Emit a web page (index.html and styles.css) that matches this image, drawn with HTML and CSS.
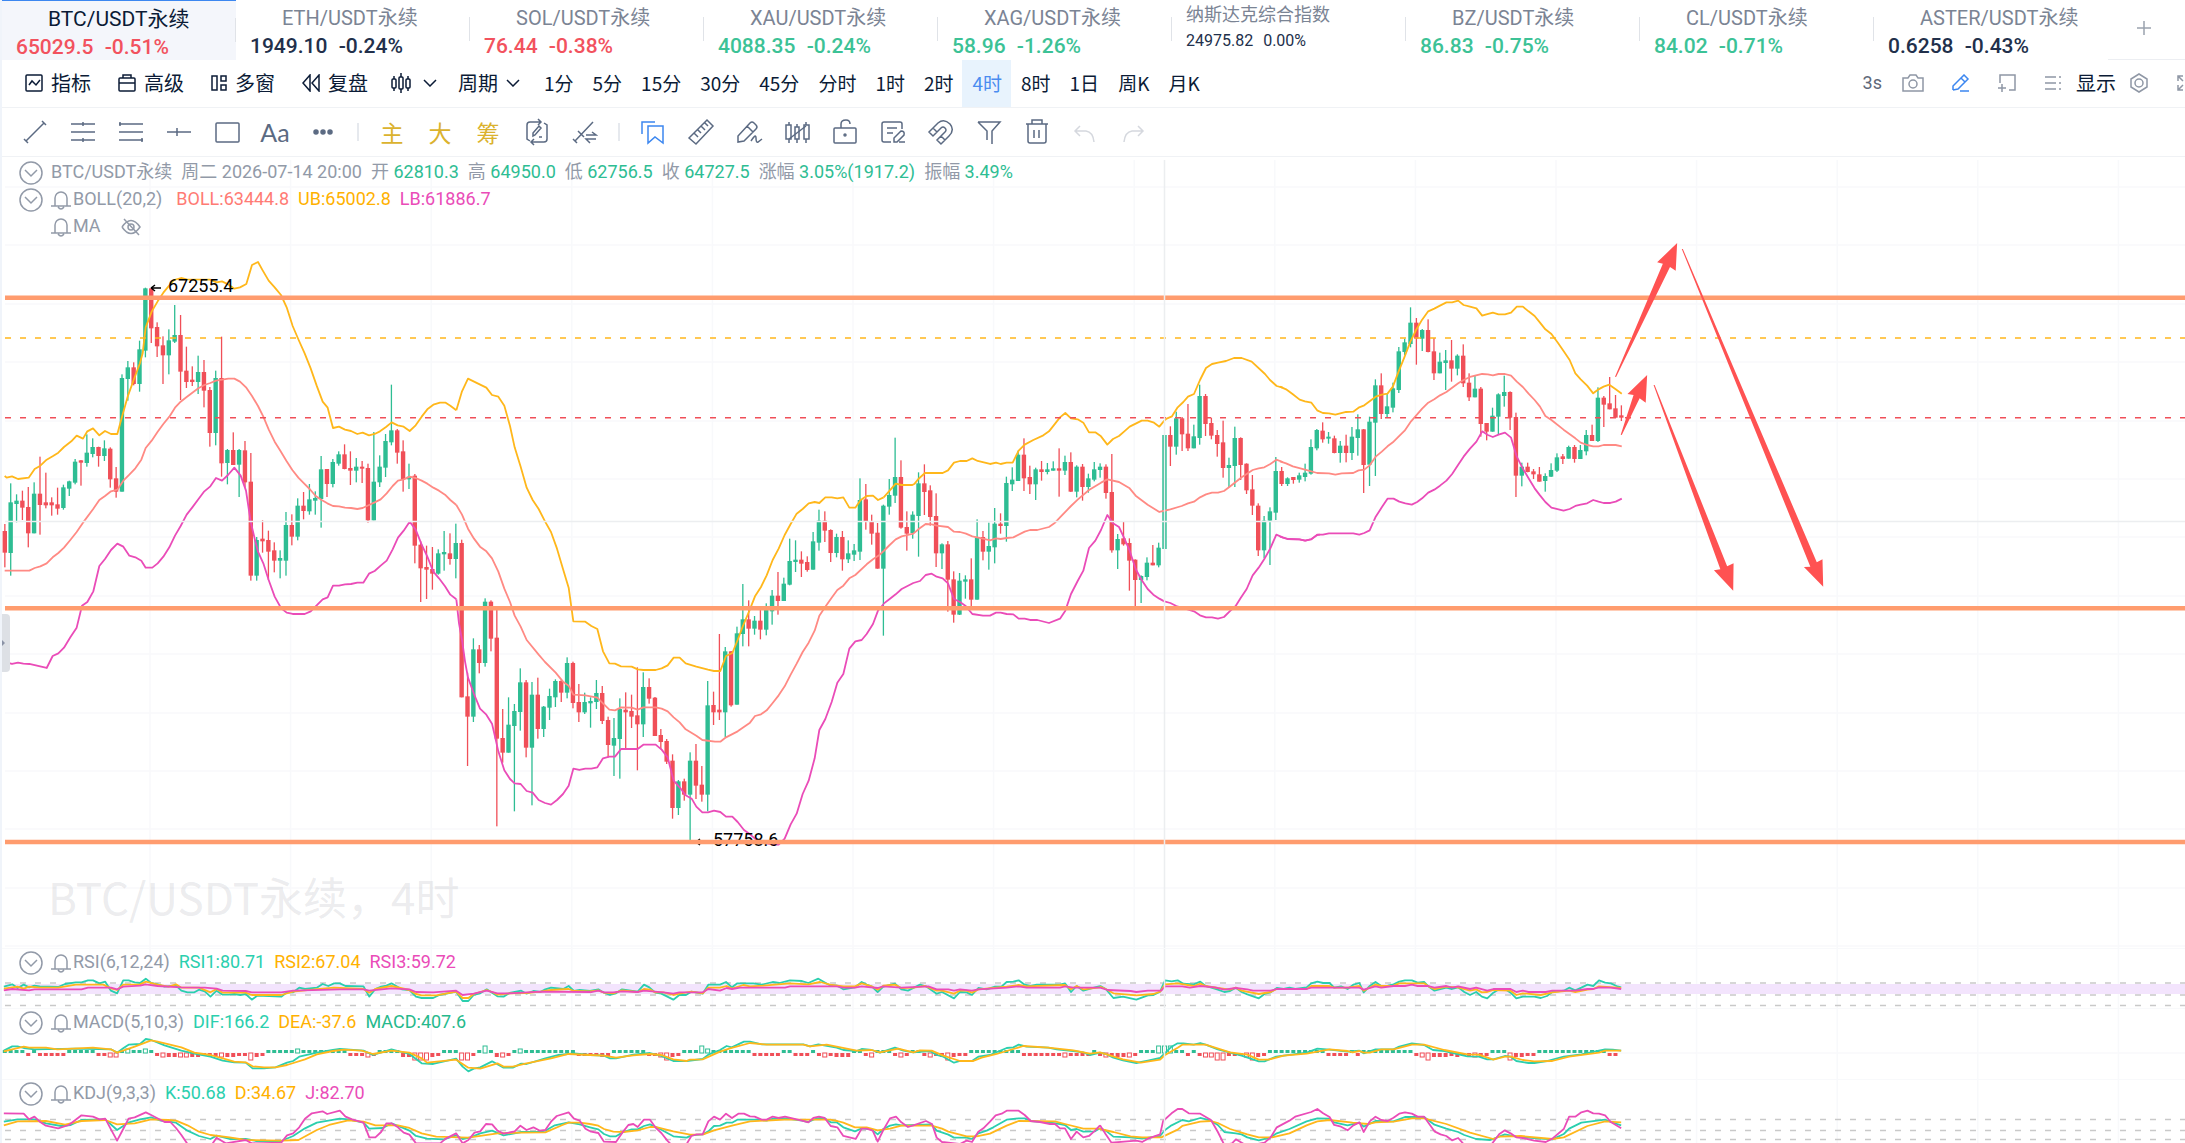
FILE: index.html
```html
<!DOCTYPE html>
<html lang="zh-CN">
<head>
    <meta charset="UTF-8">
    <meta name="viewport" content="width=device-width, initial-scale=1.0">
    <title>BTC/USDT永续</title>
    <link rel="stylesheet" href="styles.css">
</head>
<body>
    <nav class="tabs">
        <button class="tab active"><span class="name">BTC/USDT永续</span><span class="price down">65029.5 <i>-0.51%</i></span></button>
        <button class="tab"><span class="name">ETH/USDT永续</span><span class="price">1949.10 <i>-0.24%</i></span></button>
        <button class="tab"><span class="name">SOL/USDT永续</span><span class="price down">76.44 <i>-0.38%</i></span></button>
        <button class="tab"><span class="name">XAU/USDT永续</span><span class="price up">4088.35 <i>-0.24%</i></span></button>
        <button class="tab"><span class="name">XAG/USDT永续</span><span class="price up">58.96 <i>-1.26%</i></span></button>
        <button class="tab index"><span class="name">纳斯达克综合指数</span><span class="price">24975.82 <i>0.00%</i></span></button>
        <button class="tab"><span class="name">BZ/USDT永续</span><span class="price up">86.83 <i>-0.75%</i></span></button>
        <button class="tab"><span class="name">CL/USDT永续</span><span class="price up">84.02 <i>-0.71%</i></span></button>
        <button class="tab"><span class="name">ASTER/USDT永续</span><span class="price">0.6258 <i>-0.43%</i></span></button>
        <button class="add" aria-label="添加"><svg width="16" height="16" viewBox="0 0 16 16"><path d="M8 1v14M1 8h14"/></svg></button>
    </nav>

    <div class="menu">
        <button class="item"><svg width="18" height="18" viewBox="0 0 18 18"><rect x="1" y="1" width="16" height="16" rx="1"/><path d="M4 11l3-4 4 4 4-5"/></svg>指标</button>
        <button class="item"><svg width="18" height="18" viewBox="0 0 18 18"><rect x="1" y="4" width="16" height="13" rx="1"/><path d="M5 4V1h8v3M1 9h16"/></svg>高级</button>
        <button class="item"><svg width="16" height="18" viewBox="1 0 16 18"><rect x="2" y="2" width="5" height="14"/><rect x="11" y="2" width="5" height="5"/><rect x="11" y="11" width="5" height="5"/></svg>多窗</button>
        <button class="item"><svg width="18" height="18" viewBox="0 0 18 18"><path d="M8 1v16L1 9zM17 1v16l-7-8z"/></svg>复盘</button>
        <button class="item kind" aria-label="K线类型"><svg width="20" height="20" viewBox="0 0 20 20"><path d="M3 3v3M3 15v3M10 0v4M10 16v4M17 3v3M17 15v3"/><rect x="1" y="6" width="4" height="9" rx="1"/><rect x="8" y="4" width="4" height="12" rx="1"/><rect x="15" y="6" width="4" height="9" rx="1"/></svg><svg class="chev" width="14" height="8" viewBox="0 0 14 8"><path d="M1 1l6 6 6-6"/></svg></button>
        <button class="item cycle">周期<svg class="chev" width="14" height="8" viewBox="0 0 14 8"><path d="M1 1l6 6 6-6"/></svg></button>
        <div class="periods">
            <button>1分</button><button>5分</button><button>15分</button><button>30分</button><button>45分</button><button>分时</button><button>1时</button><button>2时</button><button class="on">4时</button><button>8时</button><button>1日</button><button>周K</button><button>月K</button>
        </div>
        <div class="right">
            <span class="secs">3s</span>
            <button aria-label="截图"><svg width="22" height="18" viewBox="0 0 22 18"><path d="M1 4h5l2-3h6l2 3h5v13H1z"/><circle cx="11" cy="10" r="4"/></svg></button>
            <button class="blue" aria-label="画线"><svg width="18" height="18" viewBox="0 0 18 18"><path d="M1 16v-4L12 1l4 4L6 15l-5 1M9 4l4 4M8 17h9"/></svg></button>
            <button aria-label="新窗口"><svg width="18" height="18" viewBox="0 0 18 18"><path d="M2 9V1h15v15h-6M4 10v8M0 14h8"/></svg></button>
            <button aria-label="列表"><svg width="18" height="18" viewBox="0 0 18 18"><path d="M1 3h11M1 9h11M1 15h11M15 3h2M15 9h2M15 15h2"/></svg></button>
            <button class="show">显示</button>
            <button aria-label="设置"><svg width="18" height="20" viewBox="0 0 18 20"><path d="M9 1l8 5v8l-8 5-8-5V6z"/><circle cx="9" cy="10" r="4"/></svg></button>
            <button class="full" aria-label="全屏"><svg width="18" height="18" viewBox="0 0 18 18"><path d="M2 7V2h5M2 2l5 5M2 11v5h5M2 16l5-5M11 2h5v5M16 2l-5 5M16 11v5h-5M16 16l-5-5"/></svg></button>
        </div>
    </div>

    <div class="tools">
        <button aria-label="线段"><svg viewBox="0 0 28 28"><path d="M5 23L23 5M3 21l4 4M21 3l4 4"/></svg></button>
        <button aria-label="平行线"><svg viewBox="0 0 28 28"><path d="M2 6h24M2 14h24M2 22h24M14 4v4M14 20v4"/></svg></button>
        <button aria-label="水平线"><svg viewBox="0 0 28 28"><path d="M2 6h24M2 14h24M2 22h24M3 4v4M25 20v4"/></svg></button>
        <button aria-label="十字线"><svg viewBox="0 0 28 28"><path d="M2 14h24M12 10v8"/></svg></button>
        <button aria-label="矩形"><svg viewBox="0 0 28 28"><rect x="3" y="5" width="23" height="19" rx="1"/></svg></button>
        <button class="text">Aa</button>
        <button aria-label="更多"><svg viewBox="0 0 28 28"><g class="solid"><circle cx="7" cy="14" r="2"/><circle cx="14" cy="14" r="2"/><circle cx="21" cy="14" r="2"/></g></svg></button>
        <span class="sep"></span>
        <button class="gold">主</button>
        <button class="gold">大</button>
        <button class="gold">筹</button>
        <button aria-label="循环画线"><svg viewBox="0 0 28 28"><path d="M19 4H8a3 3 0 0 0-3 3v14l3 2M16 1l3 3-3 3M9 24h13a3 3 0 0 0 3-3V7l-3-2M12 21l-3 3 3 3M11 18v-3l6-7 2 2-6 7zM17 19h3"/></svg></button>
        <button aria-label="切换画线"><svg viewBox="0 0 28 28"><path d="M5 23L23 4M8 13l6 6M3 21l4 4M16 17h10l-4-3M26 21H16l4 4"/></svg></button>
        <span class="sep"></span>
        <button class="blue" aria-label="收藏"><svg viewBox="0 0 28 28"><path d="M3 16V4h13M9 8h15v17l-8-6-7 6z"/></svg></button>
        <button aria-label="测量"><svg viewBox="0 0 28 28"><path d="M2 20L20 2l6 6L9 26zM7 15l4 4M11 12l3 3M14 8l4 4M18 5l3 3"/></svg></button>
        <button aria-label="画笔"><svg viewBox="0 0 28 28"><path d="M3 24v-6L15 5q2-2 4 0l2 2q2 2 0 4L9 23zM12 8l6 6M16 23q5-8 5-3t2 4l4-3"/></svg></button>
        <button aria-label="K线样式"><svg viewBox="0 0 28 28"><rect x="3" y="7" width="5" height="14"/><rect x="12" y="9" width="4" height="12"/><rect x="21" y="7" width="5" height="14"/><path d="M6 4v3M6 21v4M14 6v3M14 21v4M23 4v3M23 21v4M6 21L23 8"/></svg></button>
        <button aria-label="锁定"><svg viewBox="0 0 28 28"><rect x="3" y="10" width="22" height="15" rx="1"/><path d="M10 10V6q0-4 5-4 4 0 4 4"/><circle cx="14" cy="17" r="1"/></svg></button>
        <button aria-label="笔记"><svg viewBox="0 0 28 28"><path d="M12 24H5q-2 0-2-2V6q0-2 2-2h16q2 0 2 2v5M8 10h10M8 15h6M15 24v-4l7-7q4 0 3 4l-7 7zM20 24h6"/></svg></button>
        <button aria-label="磁吸"><svg viewBox="0 0 28 28"><path d="M2 14L11 5q6-5 12 1 5 6-1 12l-8 8-4-4 8-8q2-2 0-4t-4 0l-8 8zM6 10l4 4M14 18l4 4"/></svg></button>
        <button aria-label="筛选"><svg viewBox="0 0 28 28"><path d="M3 4h22l-8 9v13M3 4l9 9v9"/></svg></button>
        <button aria-label="删除"><svg viewBox="0 0 28 28"><path d="M3 6h22M5 6v17q0 2 2 2h14q2 0 2-2V6M9 6V2h10v4M11 12v8M16 12v8"/></svg></button>
        <button class="off" aria-label="撤销" disabled><svg viewBox="0 0 28 28"><path d="M9 8l-5 5 5 5M4 13h11q7 1 8 11"/></svg></button>
        <button class="off" aria-label="重做" disabled><svg viewBox="0 0 28 28"><path d="M19 8l5 5-5 5M24 13H13Q6 14 5 24"/></svg></button>
    </div>

    <svg class="defs">
        <symbol id="fold" viewBox="0 0 24 24"><circle cx="12" cy="12" r="11"/><path d="M6 9l6 6 6-6"/></symbol>
        <symbol id="bell" viewBox="0 0 20 20"><path d="M4 16V8a6 6 0 0 1 12 0v8M0 16h20M7 17q3 4 6 0"/></symbol>
    </svg>

    <main class="chart">
        <section class="pane main">
            <svg class="plot" id="main"></svg>
            <div class="legend">
                <div class="row"><svg class="fold"><use href="#fold"/></svg><span>BTC/USDT永续</span><span class="gap">周二 2026-07-14 20:00</span><span class="gap">开 <b>62810.3</b></span><span class="gap">高 <b>64950.0</b></span><span class="gap">低 <b>62756.5</b></span><span class="gap">收 <b>64727.5</b></span><span class="gap">涨幅 <b>3.05%(1917.2)</b></span><span class="gap">振幅 <b>3.49%</b></span></div>
                <div class="row"><svg class="fold"><use href="#fold"/></svg><svg class="bell"><use href="#bell"/></svg><span class="title">BOLL(20,2)</span><span class="salmon">BOLL:63444.8</span><span class="gap amber">UB:65002.8</span><span class="gap pink">LB:61886.7</span></div>
                <div class="row nofold"><svg class="bell"><use href="#bell"/></svg><span>MA</span><svg class="eye" viewBox="0 0 20 20"><path d="M1 10q9-13 18 0-9 13-18 0M3 2l15 16"/><circle cx="10" cy="10" r="3"/></svg></div>
            </div>
            <div class="watermark">BTC/USDT永续，4时</div>
        </section>
        <section class="pane rsi">
            <svg class="plot" id="rsi"></svg>
            <div class="legend">
                <div class="row"><svg class="fold"><use href="#fold"/></svg><svg class="bell"><use href="#bell"/></svg><span>RSI(6,12,24)</span><span class="gap teal">RSI1:80.71</span><span class="gap amber">RSI2:67.04</span><span class="gap pink">RSI3:59.72</span></div>
            </div>
        </section>
        <section class="pane macd">
            <svg class="plot" id="macd"></svg>
            <div class="legend">
                <div class="row"><svg class="fold"><use href="#fold"/></svg><svg class="bell"><use href="#bell"/></svg><span>MACD(5,10,3)</span><span class="gap teal">DIF:166.2</span><span class="gap amber">DEA:-37.6</span><span class="gap green">MACD:407.6</span></div>
            </div>
        </section>
        <section class="pane kdj">
            <svg class="plot" id="kdj"></svg>
            <div class="legend">
                <div class="row"><svg class="fold"><use href="#fold"/></svg><svg class="bell"><use href="#bell"/></svg><span>KDJ(9,3,3)</span><span class="gap teal">K:50.68</span><span class="gap amber">D:34.67</span><span class="gap pink">J:82.70</span></div>
            </div>
        </section>
        <button class="drawer" aria-label="展开"></button>
    </main>
    <script src="chart.js"></script>
</body>
</html>
```
FILE: styles.css
```css
* {
    box-sizing: border-box;
}
body {
    margin: 0;
    height: 100vh;
    display: flex;
    flex-direction: column;
    overflow: hidden;
    background: #fff;
    border-left: 2px solid #f0f4fa;
    font-family: Roboto, 'Noto Sans CJK SC', sans-serif;
    color: #0b1b36;
}
button {
    border: 0;
    padding: 0;
    margin: 0;
    background: none;
    font: inherit;
    color: inherit;
    cursor: pointer;
}
svg {
    fill: none;
    stroke: currentColor;
    stroke-width: 1.5;
}
.defs {
    display: none;
}

/* symbol tabs */
.tabs {
    display: flex;
    height: 60px;
    flex: none;
}
.tab {
    position: relative;
    width: 234px;
    display: flex;
    flex-direction: column;
    padding: 5px 14px 0;
    text-align: left;
    color: #22304b;
}
.tab::after {
    content: "";
    position: absolute;
    right: 0;
    top: 17px;
    height: 24px;
    border-right: 1px solid #e0e3e8;
}
.tab:nth-child(9)::after {
    display: none;
}
.tab .name {
    padding-left: 32px;
    font-size: 20px;
    line-height: 26px;
    color: #7b8494;
}
.tab .price {
    font-size: 21px;
    line-height: 30px;
    font-weight: 500;
    white-space: pre;
}
.tab .price i {
    font-style: normal;
    margin-left: 6px;
}
.tab.active {
    background: #f4f6fb;
    border-top: 1px solid #3c87f0;
}
.tab.active .name {
    font-size: 21px;
    color: #0b1b36;
}
.tab.index .name {
    padding-left: 0;
    font-size: 18px;
    line-height: 20px;
}
.tab.index .price {
    font-size: 16px;
    font-weight: 400;
    line-height: 32px;
}
.tab .price.up {
    color: #3cc296;
}
.tab .price.down {
    color: #f2525e;
}
.add {
    flex: 1;
    color: #9aa2ae;
    border-bottom: 1px solid #eceef2;
    text-align: right;
    padding-right: 33px;
}

/* period menu */
.menu {
    display: flex;
    align-items: stretch;
    height: 48px;
    flex: none;
    padding-left: 23px;
    font-family: 'Noto Sans CJK SC', sans-serif;
    border-bottom: 1px solid #f0f2f5;
}
.item {
    display: flex;
    align-items: center;
    gap: 8px;
    font-size: 20px;
    margin-right: 27px;
    padding-bottom: 2px;
}
.item.kind {
    gap: 12px;
    margin-left: -4px;
    margin-right: 21px;
}
.item.cycle {
    margin-right: 14px;
}
.periods {
    display: flex;
}
.periods button {
    padding: 0 9px 2px 10px;
    font-size: 19px;
}
.periods .on {
    background: #e8f3fd;
    color: #4a8cf0;
}
.right {
    margin-left: auto;
    margin-right: -9px;
    display: flex;
    align-items: center;
    gap: 28px;
    padding-bottom: 2px;
    color: #8f97a5;
}
.right button {
    display: flex;
}
.right .secs {
    font: 18px Roboto, sans-serif;
    color: #5e6878;
    margin-right: -8px;
}
.right .show {
    font-size: 20px;
    color: #0b1b36;
    margin: 0 -14px;
}
.right .blue {
    color: #3c87f0;
}

/* drawing tools */
.tools {
    display: flex;
    align-items: center;
    height: 49px;
    flex: none;
    padding-left: 9px;
    border-bottom: 1px solid #f0f2f5;
    color: #5b6a82;
}
.tools button {
    width: 48px;
    height: 48px;
    display: flex;
    align-items: center;
    justify-content: center;
}
.tools svg {
    width: 28px;
    height: 28px;
}
.tools .solid {
    fill: currentColor;
}
.tools .text {
    font-size: 25px;
    font-family: Lato, sans-serif;
}
.tools .gold {
    font-size: 23px;
    color: #dbb22e;
}
.tools .blue {
    color: #3c87f0;
}
.tools .off {
    color: #d5d8de;
}
.sep {
    width: 21px;
    height: 18px;
    background: linear-gradient(#e6e9ee, #e6e9ee) center / 2px 100% no-repeat;
}

/* chart panes */
.chart {
    position: relative;
    flex: 1;
    display: flex;
    flex-direction: column;
    min-height: 0;
}
.pane {
    position: relative;
    overflow: hidden;
    border-top: 1px solid #f8f9fb;
}
.pane.main {
    flex: 1;
    border-top: 0;
}
.rsi {
    height: 60px;
}
.macd {
    height: 71px;
}
.kdj {
    height: 64px;
}
.plot {
    position: absolute;
    left: -2px;
    top: 0;
    width: calc(100% + 2px);
    height: 100%;
}
.legend {
    position: relative;
    padding-left: 17px;
    color: #929aa8;
    font-size: 18px;
    line-height: 20px;
}
.main .legend {
    padding-top: 2px;
}
.row {
    display: flex;
    align-items: center;
    height: 27px;
    white-space: pre;
}
.row span {
    height: 22px;
}
.row b {
    font-weight: 400;
    color: #2ebd93;
}
.fold {
    width: 24px;
    height: 24px;
    margin-right: 8px;
}
.bell {
    width: 20px;
    height: 20px;
    margin-right: 2px;
}
.nofold {
    padding-left: 32px;
}
.eye {
    width: 20px;
    height: 20px;
    margin-left: 20px;
}
.row .gap {
    margin-left: 9px;
}
.title {
    margin-right: 14px;
}
.salmon { color: #ff7b74; }
.amber { color: #ffb100; }
.pink { color: #ea4cb8; }
.teal { color: #2bcfae; }
.green { color: #26b98c; }
.watermark {
    position: absolute;
    left: 46px;
    bottom: 20px;
    font: 44px/64px 'Noto Sans CJK SC', sans-serif;
    color: rgba(140, 145, 155, 0.18);
}
.drawer {
    position: absolute;
    left: -2px;
    top: 457px;
    width: 10px;
    height: 58px;
    background: #dde0e5;
    border-radius: 0 4px 4px 0;
}
.drawer::after {
    content: "";
    position: absolute;
    left: 0;
    top: 24px;
    border: 5px solid transparent;
    border-left-color: #8a92a5;
    border-right: 0;
}

/* plotted shapes */
.plot .grid { stroke: #f8f9fb; stroke-width: 1.5; }
.plot .cross { stroke: #eceef0; stroke-width: 1.5; }
.plot .u { fill: #2ebd93; stroke: none; }
.plot .d { fill: #f04f58; stroke: none; }
.plot .uh { stroke: #2ebd93; fill: #fff; stroke-width: 1; }
.plot .dh { stroke: #f04f58; fill: #fff; stroke-width: 1; }
.plot polyline { vector-effect: non-scaling-stroke; stroke-width: 1.8; stroke-linejoin: round; }
.plot .c-amber { stroke: #ffb71b; }
.plot .c-salmon { stroke: #ff8a84; }
.plot .c-pink { stroke: #ea4cb8; }
.plot .c-teal { stroke: #2bcfae; }
.plot .level { stroke: #ff9c6e; stroke-width: 4.5; }
.plot .dash { stroke-dasharray: 6 9; }
.plot .last { stroke: #f04f58; }
.plot .arrow { fill: #ff5252; stroke: none; }
.plot .band { fill: #f3e4fd; stroke: none; }
.plot .guide { stroke: #c9c9c9; stroke-dasharray: 6 9; }
.plot text { font-size: 18px; fill: #000; stroke: none; }
```
FILE: chart.js
```js
const NS = 'http://www.w3.org/2000/svg';
const STEP = 5.857;
const FIRST = 4.8;
const xOf = i => FIRST + STEP * i;

const add = (parent, tag, attrs) => {
    const el = document.createElementNS(NS, tag);
    for (const k in attrs) el.setAttribute(k, attrs[k]);
    parent.appendChild(el);
    return el;
};

// each pane draws in window coordinates, shifted up by its own top
const pane = (id, top) => add(document.getElementById(id), 'g', { transform: `translate(0 ${-top})` });
const hline = (g, y, cls, x = 5) => add(g, 'line', { x1: x, x2: 6000, y1: y, y2: y, class: cls });
const vline = (g, x, cls) => add(g, 'line', { x1: x, x2: x, y1: 160, y2: 3000, class: cls });
const VIEW = {
    a: 'translate(0 250) scale(.33333)',
    b: 'translate(440 350) scale(.33333)',
    c: 'translate(880 380) scale(.33333)',
    d: 'translate(1280 230) scale(.35714 .33333)',
    e: 'translate(0 840) scale(.38265 .33333)',
    f: 'translate(590 960) scale(.33333)',
    g: 'translate(1100 940) scale(.38265 .33333)'
};
const curve = (g, cls, parts) => {
    for (const k in parts) add(g, 'polyline', { points: parts[k], class: cls, transform: VIEW[k] });
};
const grid = (g) => {
    for (let i = 0; i < 40; i++) vline(g, 150 + i * 140.6, 'grid');
};

// direction, high, low, body top, body bottom, in thirds of a pixel below base
const BARS = [
    { base: 250, data: 'd822,952,843,908 u700,977,757,909 u733,817,752,762 d722,810,752,773 d711,892,771,850 u697,850,731,850 d620,854,731,765 d668,775,757,766 d742,797,757,766 d713,794,763,776 u704,779,712,774 u692,738,694,716 u627,703,635,698 d630,707,631,638 u553,650,608,639 u565,622,591,612 d590,650,591,618 u571,633,595,618 d592,713,596,688 d651,743,685,725 u373,725,384,725 u333,452,352,387 d337,406,352,402 u272,425,298,402 u113,322,115,302 d115,279,115,235 d217,321,231,289 d259,402,286,316 u238,373,271,316 u165,279,255,275 d195,450,255,365 d290,414,362,396 d349,408,389,396 u317,432,366,396 d330,472,366,422 d411,590,420,549 u362,586,384,549 d260,680,384,640 u597,703,600,639 d547,645,600,645 u597,741,600,644 d573,713,601,697 d609,992,695,977 u861,992,870,977 d811,908,866,874 d842,990,870,905 d877,967,901,932 u901,985,924,932 u786,977,825,932 d793,886,825,860 u745,871,767,860 d726,808,767,783 u702,794,748,784 u724,794,744,752 u618,833,658,747 d657,741,657,702 u627,712,636,702 u604,647,613,641 d583,658,613,657 d604,705,654,662 u624,697,650,662 d633,699,650,656 d641,818,654,811 u546,811,695,811 u616,711,650,697 u552,681,573,653 u404,586,541,577 d537,641,541,608 d571,725,604,688 u641,717,680,688 d672,940,677,887 d874,1056,884,955 d887,1047,951,959 d891,1019,957,971 u898,974,910,971 u843,962,906,913 d850,944,910,927 u821,985,879,927' },
    { base: 350, data: 'd569,1042,579,1042 d968,1248,1039,1100 u865,1116,898,1100 d885,970,898,939 u745,950,755,939 d751,904,755,866 d780,1429,863,1166 d1077,1238,1164,1208 u1042,1208,1124,1208 u1062,1384,1083,1128 u955,1142,997,1086 d990,1222,997,1193 u996,1366,1034,1193 d983,1166,1034,1137 u1068,1161,1070,1137 u1016,1110,1038,1073 u988,1071,993,1042 d990,1056,993,1028 u922,1045,939,1028 d935,1075,939,1059 d1002,1116,1056,1087 u1028,1092,1056,1087 u1042,1133,1053,1060 u990,1077,1029,1056 d1008,1122,1029,1113 d1100,1222,1110,1185 u1104,1278,1164,1187 u1045,1286,1077,1167 d1027,1196,1079,1087 d1034,1134,1083,1100 d952,1261,1096,1123 u967,1161,1011,1123 d985,1061,1011,1046 d1041,1158,1043,1158 d1137,1198,1155,1176 d1167,1242,1173,1235 d1213,1406,1232,1374 u1290,1395,1294,1374 d1286,1352,1294,1334 u1207,1470,1232,1334 d1182,1347,1232,1307 d1248,1355,1304,1334 u993,1384,1066,1334 d1025,1125,1065,1087 d852,1110,1079,1087 u891,1161,904,1087 d903,1070,904,1066 u830,1064,850,1064 u702,889,808,852 d751,889,808,836 u798,854,812,836 d778,868,812,839 u760,856,780,839 u720,824,737,784 d666,794,737,753 u683,753,701,753 u566,706,633,704 u571,666,629,636 d604,681,629,641 d619,665,636,660 u546,659,574,659 u479,602,512,578 d484,576,512,542 d538,636,540,609 u551,622,561,609 d543,662,561,628 u571,639,610,628 u582,633,601,614 u385,630,450,605 d402,539,448,513 d494,584,513,551 d519,656,548,656 u464,857,467,656 u387,494,435,470 u263,459,381,437 d331,536,381,533 d484,602,531,551 u484,566,494,549' },
    { base: 380, data: 'u277,530,310,408 d253,405,310,336 d316,437,331,411 d340,561,408,520 u490,567,493,520 d483,695,493,599 d574,728,598,704 u579,705,602,704 u586,656,598,605 d535,688,598,659 u418,659,472,659 d453,541,471,515 u428,569,498,515 u384,550,431,502 d400,461,431,438 u290,485,309,438 u262,333,299,313 u212,303,224,303 d175,333,224,295 d257,342,291,313 u263,360,268,313 d243,302,268,276 u249,283,268,276 u244,272,265,272 d205,350,265,272 u227,285,246,272 d217,336,246,335 u256,352,260,335 d252,362,260,321 u281,338,295,321 u246,304,268,299 u250,293,260,270 d253,356,260,339 d222,518,336,511 u462,567,477,511 d426,497,475,493 d475,632,489,542 d538,678,539,600 u586,669,588,600 u532,601,548,591 d495,556,548,556 u488,562,503,556 u165,507,165,507 d139,258,165,200 u95,224,115,200 d111,213,115,163 d72,213,161,205 u134,205,169,205 u14,194,48,174 d42,168,48,132 d113,178,129,167 d150,230,165,192 d122,293,187,264 u233,321,255,264 u140,321,174,258 d172,300,174,255 d250,342,251,331 d285,405,328,377 d370,528,377,511 u408,535,422,511 u382,555,394,422 u231,420,273,398 d261,318,273,312 u292,318,295,312 d291,311,291,300 u278,308,286,299 u251,304,278,291 u178,284,201,281 u147,211,150,205' },
    { base: 230, data: 'd577,638,602,628 u606,641,620,626 d617,670,625,669 u633,698,647,669 d614,697,647,669 u591,690,620,669 u553,677,598,624 d597,789,598,705 u560,768,575,704 u448,738,466,578 d430,567,466,552 u490,563,529,552 u458,547,475,533 u351,489,364,480 u326,375,337,366 u232,352,278,342 d264,404,278,326 u297,363,300,326 d268,367,300,366 d324,450,364,430 u368,430,395,430 u360,480,391,399 d330,455,391,416 u373,436,377,416 d343,471,377,460 d430,513,458,502 u438,502,476,502 d471,620,476,582 d579,631,579,605 u533,605,557,605 u490,614,493,560 u437,530,486,498 d484,600,486,563 d548,801,561,737 u698,769,710,737 d698,727,710,726 d717,747,724,733 d711,755,733,755 u730,785,738,753 u700,741,720,740 u670,726,682,722 d672,702,679,687 u647,686,651,686 d645,698,651,687 u645,687,660,687 u600,676,615,664 d584,633,615,633 u472,636,503,633 d498,591,503,524 d441,538,520,538 d495,563,535,563 d526,573,556,563' }
];

// main pane
const main = pane('main', 157);
for (let i = 0; i < 14; i++) hline(main, Math.round(187 + i * 58.4), 'grid');
grid(main);

let n = 0;
BARS.forEach(({ base, data }) => data.split(' ').forEach(bar => {
    const cls = bar[0];
    const [hi, lo, top, bot] = bar.slice(1).split(',').map(v => base + v / 3);
    const x = xOf(n++);
    add(main, 'rect', { x: x - 0.6, y: hi, width: 1.3, height: lo - hi, class: cls });
    add(main, 'rect', { x: x - 2.2, y: top, width: 4.4, height: Math.max(bot - top, 1.5), class: cls });
}));

curve(main, 'c-salmon', {
    a: '14,962 88,962 104,954 121,949 140,940 158,922 175,909 192,893 211,870 230,846 249,818 279,778 298,750 315,738 333,724 352,719 370,692 388,674 406,655 424,629 437,594 455,572 473,545 490,522 508,500 525,473 542,455 560,441 577,428 595,415 613,405 631,399 648,392 685,386 703,386 720,395 738,412 756,438 774,468 790,500 806,538 824,575 841,602 859,632 877,660 895,683 912,700 929,717 947,738 965,750 982,760 999,768 1017,769 1035,773 1053,774 1072,777 1088,774 1107,765 1124,757 1142,748 1160,730 1178,708 1194,692 1211,688 1229,680 1247,684 1265,692 1282,701 1300,713 1317,722 1335,734 1351,750 1369,765',
    b: '49,465 66,494 84,536 102,566 120,590 139,604 156,625 175,665 193,716 210,756 224,797 242,830 260,870 296,914 315,936 347,968 369,995 386,1007 400,1034 436,1036 472,1043 489,1060 508,1079 525,1081 543,1072 575,1073 593,1079 610,1072 647,1072 665,1076 683,1084 701,1102 719,1117 737,1138 769,1157 787,1170 825,1175 841,1175 858,1162 893,1144 930,1118 945,1098 963,1093 980,1081 998,1059 1016,1036 1034,1009 1052,974 1070,941 1088,906 1106,878 1124,842 1138,797 1156,770 1175,743 1192,720 1210,707 1228,685 1246,675 1280,643 1299,628 1317,616 1331,603',
    c: '11,513 29,495 47,478 65,469 100,461 115,448 137,432 155,433 170,437 204,441 222,455 240,456 258,461 277,469 309,476 330,481 348,475 362,477 380,474 400,472 434,455 450,450 472,450 507,441 523,430 540,412 573,378 593,359 627,330 663,308 682,298 717,306 749,325 767,347 803,374 838,396 871,388 905,378 924,370 942,365 960,352 978,343 996,338 1014,338 1032,333 1049,320 1067,306 1085,292 1100,282 1118,270 1136,265 1153,262 1171,252 1189,239 1208,246',
    d: '0,694 17,700 36,709 70,719 104,729 137,730 155,734 173,730 205,729 220,721 236,719 251,706 268,680 285,665 301,649 316,637 332,620 349,602 367,574 381,557 398,536 415,518 432,508 448,496 466,486 482,473 499,460 514,450 532,441 566,432 582,433 596,436 612,432 630,432 647,437 663,455 680,471 696,491 713,510 728,530 743,558 760,570 794,599 827,625 842,638 860,645 877,649 892,649 906,645 940,645 957,649'
});
curve(main, 'c-amber', {
    a: '14,678 20,683 36,679 54,687 86,683 104,657 121,647 140,629 158,619 175,608 192,591 214,574 230,557 249,566 262,544 279,535 298,556 315,543 333,552 352,552 366,500 383,440 401,390 419,342 428,310 437,232 455,185 473,154 490,128 508,106 522,90 543,84 560,88 630,89 650,97 666,94 686,104 703,116 720,112 739,102 756,45 774,36 788,61 806,92 824,112 843,135 860,172 878,228 896,270 914,310 932,355 950,407 968,455 983,473 999,534 1017,530 1035,539 1053,543 1072,552 1088,548 1107,556 1124,552 1140,544 1158,531 1175,517 1193,526 1211,530 1229,543 1247,526 1265,500 1282,478 1300,464 1320,458 1337,458 1351,467 1369,481',
    b: '49,181 66,124 84,86 119,103 139,113 156,135 175,140 193,167 210,228 224,292 242,350 260,413 278,450 296,477 315,514 333,546 351,596 369,657 386,713 400,814 436,815 454,828 472,837 489,904 508,940 525,941 543,949 575,950 593,958 610,960 647,960 665,955 683,946 701,923 719,923 737,940 769,950 804,959 822,963 841,963 858,918 877,909 893,870 908,830 927,785 945,739 963,711 980,676 998,630 1016,596 1034,555 1052,522 1070,491 1088,477 1106,460 1124,456 1138,459 1156,442 1175,442 1192,445 1210,442 1228,473 1246,473 1262,450 1280,438 1299,437 1314,450 1331,442',
    c: '11,352 29,332 47,311 65,315 97,315 104,311 115,297 135,279 188,279 204,271 222,248 240,243 260,243 277,235 293,243 330,252 348,248 362,252 380,248 398,248 416,212 434,194 460,180 490,166 507,154 523,134 540,112 556,99 573,115 593,118 610,128 627,157 646,157 663,169 682,194 699,177 717,168 733,154 749,140 767,131 785,122 803,122 822,128 838,140 853,122 860,116 876,109 893,82 910,66 924,50 942,42 960,0 978,-36 996,-48 1014,-52 1038,-57 1062,-66 1085,-66 1115,-55 1155,-18 1170,0 1190,18 1208,23',
    d: '0,470 17,478 36,493 55,509 70,514 88,518 104,541 120,549 137,550 155,554 185,546 205,545 220,533 236,526 251,514 268,500 285,494 301,491 316,470 332,425 349,380 365,335 381,300 398,269 415,244 432,236 448,227 466,217 482,217 499,212 514,225 532,230 550,235 566,257 578,253 596,248 612,253 630,253 647,248 663,230 680,230 696,244 713,258 728,278 743,298 760,312 778,338 794,363 811,390 827,430 842,448 860,467 877,490 892,478 906,470 922,464 940,478 957,491'
});
curve(main, 'c-pink', {
    a: '24,1239 36,1242 54,1238 70,1241 88,1242 140,1254 158,1218 175,1210 192,1193 211,1162 230,1133 246,1067 262,1056 280,1024 298,948 315,927 333,900 352,881 370,890 388,917 406,922 424,932 437,953 457,953 473,940 490,920 508,892 525,857 542,828 560,794 577,772 595,748 613,724 631,709 648,684 666,692 684,675 703,653 722,677 738,722 752,815 765,870 774,905 790,940 806,990 824,1040 843,1074 860,1088 878,1092 914,1092 932,1084 950,1066 968,1048 983,1042 999,1007 1017,1007 1035,1003 1053,1002 1072,998 1090,998 1107,971 1124,963 1142,947 1160,932 1178,898 1194,863 1211,842 1229,815 1247,839 1265,884 1282,920 1300,965 1317,985 1335,1009 1351,1034 1369,1048',
    b: '49,748 57,820 66,870 75,934 84,983 102,1032 120,1076 139,1094 156,1121 165,1160 175,1204 193,1261 210,1287 224,1300 242,1302 260,1323 278,1328 296,1350 315,1359 333,1364 351,1350 369,1332 386,1307 400,1256 418,1260 436,1256 454,1256 472,1252 489,1225 508,1220 525,1220 543,1197 593,1197 610,1184 647,1184 665,1199 683,1222 701,1292 719,1312 737,1336 755,1346 769,1370 787,1387 804,1387 822,1382 841,1386 858,1400 877,1400 893,1416 912,1440 930,1453 945,1466 980,1480 1000,1484 1016,1484 1034,1466 1052,1423 1070,1391 1088,1332 1106,1292 1124,1225 1138,1140 1156,1107 1175,1056 1192,998 1210,972 1228,896 1246,874 1265,870 1280,852 1299,822 1314,782 1331,762',
    c: '11,671 29,657 47,643 65,627 100,609 120,603 137,585 155,581 170,590 188,595 204,610 222,657 240,666 258,679 277,702 309,707 330,707 348,698 362,698 380,702 400,703 416,716 434,716 450,720 472,720 507,729 540,716 556,692 573,642 593,603 610,572 627,504 646,482 663,450 682,405 699,430 717,441 733,475 749,512 767,567 785,600 803,627 820,644 838,656 853,664 871,669 889,678 942,694 960,706 978,712 996,712 1014,716 1032,711 1049,694 1067,678 1082,654 1100,627 1118,586 1136,563 1153,537 1171,505 1189,464 1208,472 1225,477 1258,478 1276,482 1294,477 1312,465 1320,464',
    d: '0,920 20,927 55,928 70,932 88,928 104,914 120,914 137,910 205,910 222,914 236,909 251,901 268,860 285,832 301,806 318,806 334,815 351,820 369,824 384,816 398,805 415,788 432,779 448,767 466,752 482,732 499,704 514,680 532,656 550,635 566,604 582,615 596,621 612,614 630,608 647,623 663,680 680,716 696,745 713,775 728,796 743,816 760,833 794,842 811,837 827,828 842,824 860,820 877,810 892,815 906,819 925,819 940,815 957,806'
});

hline(main, 521.5, 'cross');
hline(main, 338, 'c-amber dash');
hline(main, 417.7, 'last dash');
const label = (x, y, value) => {
    add(main, 'text', { x, y }).textContent = value;
    add(main, 'path', { d: `M${x - 17} ${y - 4}h10m-10 0l4 -3m-4 3l4 3`, stroke: '#000' });
};
label(168, 292, '67255.4');
label(713, 846, '57758.6');
[297.7, 608.2, 842].forEach(y => hline(main, y, 'level'));
[
    '938,440 1072,101 1056,97 1112,39 1108,122 1092,111 941,441',
    '954,614 990,495 973,492 1028,435 1024,518 1007,505 957,615',
    '1046,465 1233,1018 1215,1021 1269,1082 1270,1000 1252,1009 1049,465',
    '1125,57 1485,1010 1467,1011 1521,1070 1519,988 1503,997 1128,57'
].forEach(points => add(main, 'polygon', { points, class: 'arrow', transform: VIEW.d }));
vline(main, 1164.5, 'cross');

// RSI
const rsi = pane('rsi', 949);
grid(rsi);
add(rsi, 'rect', { x: 5, y: 984, width: 6000, height: 10, class: 'band' });
[983, 995, 1005.5].forEach(y => hline(rsi, y, 'guide'));
curve(rsi, 'c-teal', {
    e: '10,440 32,433 46,444 62,434 76,442 90,437 104,439 152,441 170,432 198,427 213,427 230,421 243,421 260,430 275,425 290,452 306,460 322,421 336,421 352,427 366,429 381,416 395,429 412,433 430,440 460,437 474,452 490,457 508,457 520,449 535,454 550,470 566,452 582,464 598,464 612,462 628,465 642,462 658,479 672,467 735,470 750,457 766,457 782,443 797,447 828,443 843,432 858,438 873,430 888,430 903,438 950,439 965,470 981,447 996,440 1010,437 1023,430 1050,448 1070,450 1087,470 1102,474 1132,474 1148,465 1192,455 1209,483 1224,483 1238,465 1255,460 1272,448 1286,458 1300,469 1316,470 1332,459 1362,452 1376,461 1394,453 1412,456 1425,448 1440,443 1472,447 1486,438 1500,453 1515,450 1542,453',
    f: '0,93 25,88 42,98 60,105 78,100 96,88 143,95 162,74 178,82 196,98 214,101 250,119 268,105 288,105 304,95 338,101 355,74 390,74 408,66 426,82 442,70 490,70 515,74 548,66 568,69 600,61 636,63 655,69 685,56 702,66 718,75 742,77 760,88 795,82 815,66 830,74 846,80 863,96 880,80 915,71 934,88 954,92 990,74 1010,80 1040,101 1056,96 1092,115 1110,96 1130,97 1146,105 1165,84 1190,88 1215,80 1235,79 1250,66 1270,65 1286,61 1304,74 1322,78 1340,74 1410,74 1425,70 1443,96 1460,78 1480,92 1515,82 1530,78',
    g: '0,137 15,147 35,174 60,170 95,179 125,166 140,165 157,155 170,121 187,124 203,121 218,131 245,133 262,125 276,138 308,149 325,156 340,153 355,143 370,156 385,163 415,175 430,162 446,157 462,144 480,147 495,143 510,147 540,142 552,130 568,125 583,129 600,129 612,143 630,139 647,147 662,134 678,129 689,157 705,138 720,126 735,138 752,137 767,133 782,125 797,121 815,121 830,128 847,126 858,139 874,152 905,143 920,147 936,142 952,156 967,165 983,156 998,170 1012,175 1028,158 1043,148 1058,147 1073,158 1088,175 1105,170 1135,170 1152,174 1168,168 1182,156 1212,152 1226,143 1242,151 1258,143 1274,134 1289,138 1304,121 1320,128 1335,130 1350,138 1362,142'
});
curve(rsi, 'c-amber', {
    e: '10,446 46,440 62,446 76,440 104,443 152,443 198,434 270,434 290,445 306,450 322,434 366,433 381,425 412,434 440,440 460,433 474,443 520,443 550,457 566,447 582,458 612,457 642,458 658,465 735,465 766,455 797,451 843,446 873,443 950,447 965,458 981,447 1023,438 1070,450 1087,462 1102,466 1140,466 1192,455 1209,474 1224,474 1238,462 1272,450 1286,456 1300,464 1332,460 1376,459 1412,455 1440,450 1486,447 1500,453 1542,454',
    f: '0,94 25,91 42,98 70,100 96,91 143,96 162,87 180,89 196,97 220,97 250,105 268,101 304,95 338,100 355,83 390,83 410,78 426,86 460,75 480,79 520,77 600,70 655,73 690,66 720,74 760,79 795,79 815,70 845,79 863,89 880,77 915,74 934,84 970,83 1005,78 1040,92 1056,92 1092,101 1110,92 1130,92 1146,98 1165,88 1250,80 1286,75 1310,79 1425,75 1443,88 1460,78 1480,88 1530,82',
    g: '0,140 15,147 35,160 95,166 140,162 157,155 170,133 203,130 245,138 262,131 276,138 308,144 340,149 355,143 370,152 415,162 446,156 462,147 540,147 552,138 600,138 612,143 647,143 678,138 689,152 720,134 735,138 767,137 782,130 847,130 860,140 874,147 905,140 936,142 967,152 983,148 998,157 1012,156 1028,150 1073,152 1088,165 1105,160 1152,165 1182,157 1226,152 1242,156 1274,149 1289,147 1304,139 1362,144'
});
curve(rsi, 'c-pink', {
    e: '10,451 32,447 76,451 90,448 213,448 230,443 290,443 306,448 322,440 366,437 381,433 412,438 474,442 535,443 566,446 582,452 642,453 658,457 735,457 766,452 888,448 950,448 965,452 1023,445 1070,448 1087,456 1132,457 1192,452 1209,465 1238,461 1272,452 1300,460 1332,460 1412,455 1542,456',
    f: '0,97 25,92 42,97 70,97 96,94 143,96 162,92 220,97 250,101 268,97 338,97 355,87 390,92 410,84 426,87 450,83 585,83 600,79 740,79 760,83 795,83 815,79 863,84 880,79 934,83 1015,79 1040,88 1075,88 1092,92 1110,88 1146,92 1165,88 1250,83 1286,79 1310,83 1410,83 1425,79 1450,83 1530,83',
    g: '0,143 20,150 80,153 95,156 125,152 160,152 170,139 215,139 235,143 262,138 300,142 325,149 355,144 385,148 400,152 446,152 462,147 540,147 552,143 678,143 689,149 720,139 735,143 767,138 797,138 815,134 830,138 858,138 874,143 905,138 920,143 936,139 967,147 983,143 1012,152 1028,147 1073,147 1088,156 1105,152 1120,156 1165,156 1182,152 1242,152 1274,147 1289,147 1304,142 1335,143 1362,147'
});
vline(rsi, 1164.5, 'cross');

// MACD, one letter per histogram bar: [class, height]
const HIST = { a: ['u', 3], A: ['uh', 4], G: ['uh', 7], r: ['d', -3], R: ['d', -4], H: ['dh', -4], T: ['dh', -7] };
const CODES = 'aaaararrrrraaaaarrHHaAaaAa' + 'rHRRHHRRrRrHRRrrTRr' + 'aaaaaAaaaaaaaa' + 'rrrHraaaaRRTTTRraaaTTraGaRHraAaaaaaaaaarrr'
    + 'rRRaaaaaarrHTRraaaGAaaaaaaarrrrraarrrarHrRRRaarHaaarHraarHrRTRrraaaaaaaaarrrrrrrHrrrrar'
    + 'HRRRHraaaGGGaararHHTTrrrHTRraaaaaaaaaarrrraraaaaaaaaarHTRRRrRrrHRraaaTRRrraaaaaaaaaaaarr';
const macd = pane('macd', 1009);
hline(macd, 1053, 'grid');
grid(macd);
[...CODES].forEach((code, i) => {
    const [cls, h] = HIST[code];
    add(macd, 'rect', { x: xOf(i) - 2, y: h > 0 ? 1053 - h : 1053, width: 4, height: Math.abs(h), class: cls });
});
curve(macd, 'c-teal', {
    e: '10,632 32,619 46,619 62,624 90,628 198,626 290,628 306,638 322,625 336,614 366,612 381,597 395,600 430,616 474,632 508,641 550,650 582,662 612,667 642,668 660,685 690,685 720,682 750,668 766,663 782,650 828,638 870,630 888,627 950,632 975,645 1023,628 1070,642 1102,670 1132,672 1192,656 1209,680 1224,694 1238,686 1255,682 1286,664 1316,683 1340,683 1362,671 1376,672 1425,655 1460,645 1500,640 1542,645',
    f: '0,285 42,287 60,295 78,295 130,284 180,279 214,288 250,303 290,303 338,297 355,284 390,270 410,258 425,262 462,245 480,245 515,253 640,253 660,259 685,253 740,263 760,270 800,273 815,267 845,270 870,278 915,263 940,272 970,277 1020,273 1040,285 1060,290 1092,308 1110,303 1146,303 1165,290 1200,285 1250,264 1270,262 1286,254 1310,260 1375,263 1400,268 1450,273 1480,277 1500,285 1530,278',
    g: '0,338 15,342 35,353 60,361 95,369 125,362 157,354 187,320 203,310 218,310 245,314 262,309 276,314 308,328 340,338 370,347 415,364 430,364 460,350 540,338 568,326 600,329 647,335 678,332 689,340 720,328 767,328 782,320 815,310 847,315 870,330 900,333 960,349 990,350 1012,358 1028,358 1058,348 1073,350 1088,363 1120,369 1135,369 1168,363 1212,350 1258,343 1304,332 1320,328 1340,329 1362,332'
});
curve(macd, 'c-amber', {
    e: '10,634 62,620 76,623 120,623 150,628 243,623 290,628 306,638 352,620 395,601 412,605 474,622 508,638 550,645 582,655 612,665 642,667 660,679 690,682 720,682 750,675 797,658 828,643 870,633 900,629 945,632 975,642 1023,632 1070,638 1102,655 1116,668 1192,659 1224,683 1255,686 1300,670 1316,680 1340,680 1376,670 1440,655 1486,642 1542,645',
    f: '0,285 42,287 78,293 130,286 180,282 214,285 250,298 290,303 300,299 338,298 390,275 420,265 480,249 530,254 640,254 660,259 710,254 800,272 845,270 870,277 925,266 970,277 990,271 1025,272 1060,287 1110,303 1150,303 1175,293 1220,282 1250,273 1300,258 1375,263 1450,271 1500,281 1530,277',
    g: '0,337 60,358 107,368 157,359 170,345 203,323 215,314 276,314 340,337 385,344 415,359 440,359 480,347 540,341 600,328 647,333 660,337 678,333 689,338 705,338 735,328 767,328 815,314 847,314 900,330 960,343 990,344 1028,359 1058,350 1073,350 1105,360 1135,364 1182,363 1226,350 1304,338 1320,332 1362,332'
});
vline(macd, 1164.5, 'cross');

// KDJ
const kdj = pane('kdj', 1080);
grid(kdj);
[1119.5, 1130.5, 1139.5].forEach(y => hline(kdj, y, 'guide'));
curve(kdj, 'c-teal', {
    e: '10,845 46,838 90,838 120,850 160,858 185,855 213,840 275,838 306,870 335,848 366,838 395,832 420,842 460,848 490,872 520,888 550,897 566,887 600,897 642,897 670,903 735,903 766,888 797,865 828,848 888,836 910,838 950,848 965,866 1000,864 1023,850 1050,862 1070,872 1087,888 1116,896 1160,898 1192,886 1209,897 1230,892 1255,880 1286,872 1316,886 1362,876 1412,875 1425,872 1450,856 1486,847 1515,853 1542,862',
    f: '0,502 25,508 42,522 60,529 78,529 100,516 125,508 143,508 162,498 180,493 214,509 250,529 290,533 304,526 338,523 355,514 372,498 390,497 410,488 426,488 442,479 500,479 530,482 550,476 585,475 636,482 655,486 672,478 690,474 704,475 722,487 740,487 760,502 795,514 815,505 845,508 863,523 880,507 900,497 918,493 934,496 1025,493 1040,512 1075,524 1092,533 1130,533 1146,537 1165,520 1190,512 1210,502 1250,479 1286,475 1304,475 1322,483 1380,488 1410,492 1425,495 1443,510 1460,507 1480,515 1515,514 1530,505',
    g: '0,565 15,572 35,590 80,592 110,596 157,588 170,570 187,556 215,540 232,544 262,534 290,542 308,555 325,576 355,580 370,583 385,592 415,601 446,592 462,580 495,567 540,544 568,535 600,536 612,547 647,556 678,548 689,560 720,543 767,544 797,531 847,531 874,554 905,566 936,576 952,585 983,597 1020,600 1058,583 1088,590 1152,596 1182,598 1212,582 1226,566 1258,548 1320,539 1335,546 1362,556'
});
curve(kdj, 'c-amber', {
    e: '10,856 46,844 120,843 170,854 213,843 275,840 306,853 352,850 395,838 440,840 460,842 490,856 520,875 550,885 600,892 642,900 735,902 780,900 828,870 860,855 910,841 950,845 981,856 1040,856 1070,864 1102,880 1140,890 1224,893 1300,880 1362,878 1425,877 1470,855 1486,848 1515,848 1542,852',
    f: '0,492 25,497 42,507 70,515 100,516 143,511 180,501 196,501 250,514 300,524 340,523 372,511 426,497 480,484 585,479 720,479 742,483 760,488 795,502 830,502 863,511 900,506 934,497 1025,497 1056,506 1075,515 1130,529 1160,529 1200,521 1250,497 1286,483 1395,484 1425,492 1480,506 1530,506',
    g: '0,567 35,576 80,589 110,592 160,592 203,569 215,558 262,545 290,543 308,549 340,567 385,583 415,592 450,592 495,580 540,556 568,544 600,540 660,548 700,552 720,547 767,545 815,535 847,535 905,552 967,578 1028,597 1043,590 1100,588 1182,597 1212,592 1274,558 1320,544 1362,547'
});
curve(kdj, 'c-pink', {
    e: '10,820 62,821 76,838 90,830 104,845 120,857 152,865 180,855 213,826 243,830 260,838 275,836 290,868 306,902 322,867 336,836 352,832 381,817 395,825 430,846 445,846 460,864 474,885 490,912 550,920 566,893 590,910 642,900 658,910 735,908 750,886 766,880 782,862 797,836 815,820 843,814 855,822 888,812 903,830 920,838 950,848 965,892 981,892 996,876 1010,850 1023,850 1040,862 1055,878 1070,884 1087,910 1150,910 1165,896 1192,880 1209,910 1224,900 1240,878 1255,874 1270,852 1286,853 1300,872 1316,881 1345,874 1360,857 1376,870 1394,862 1410,872 1425,870 1440,845 1455,828 1486,817 1500,836 1515,842 1530,866 1542,874',
    f: '0,514 25,519 42,545 78,546 100,514 115,495 130,492 143,501 162,479 180,479 196,502 214,519 232,542 250,560 290,552 304,528 320,523 338,523 355,484 372,470 390,479 408,461 426,474 445,461 462,461 480,469 494,470 515,479 530,479 548,470 565,474 585,470 636,482 655,487 670,474 687,470 704,474 722,498 742,502 760,528 797,537 815,506 830,506 848,512 863,545 880,510 900,475 918,470 934,487 954,501 970,496 1008,483 1026,492 1040,533 1056,546 1110,552 1130,542 1146,546 1165,515 1180,505 1200,485 1217,466 1235,461 1250,452 1286,452 1304,465 1322,483 1350,486 1380,492 1395,492 1410,505 1425,505 1443,537 1460,515 1480,532 1497,528 1515,512 1530,496',
    g: '0,556 15,583 30,608 95,602 110,606 125,596 157,583 165,543 187,520 203,507 215,507 232,520 262,521 290,540 308,576 325,615 345,610 355,598 385,618 430,608 446,592 462,562 495,542 510,530 552,516 568,507 583,520 600,531 612,555 630,560 647,571 662,556 678,547 689,576 705,544 720,530 735,540 752,543 767,533 782,521 797,517 815,521 830,530 847,530 874,574 890,583 905,588 920,601 936,594 950,612 1020,618 1043,583 1058,571 1073,580 1088,592 1105,594 1135,602 1165,606 1182,596 1212,567 1226,530 1242,530 1258,517 1274,512 1289,520 1304,521 1320,526 1335,546 1362,565'
});
vline(kdj, 1164.5, 'cross');
```
